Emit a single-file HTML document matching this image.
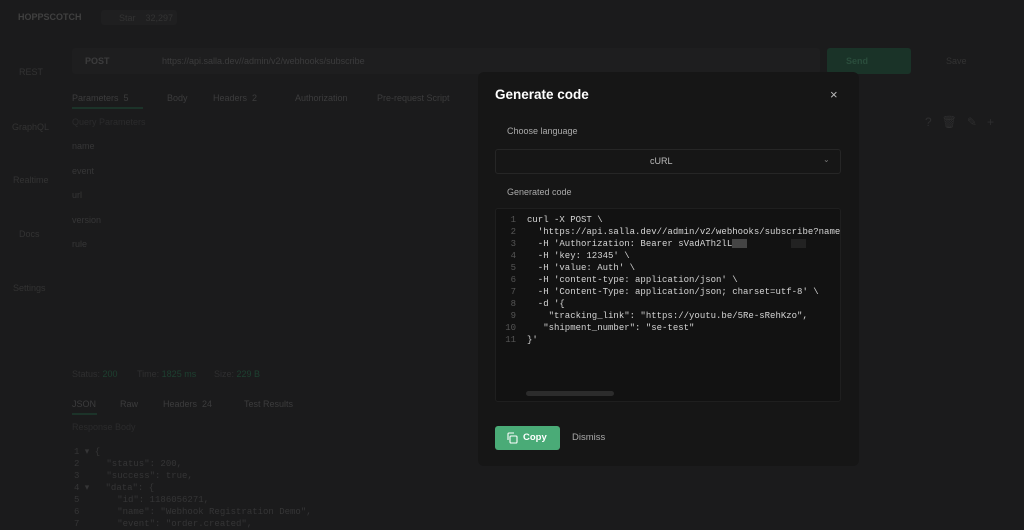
<!DOCTYPE html>
<html><head><meta charset="utf-8"><style>
*{box-sizing:border-box;margin:0;padding:0}
body{width:1024px;height:524px;overflow:hidden;background:#1b1b1c;font-family:"Liberation Sans",sans-serif;position:relative;color:#363637;font-size:9px}
.a{position:absolute;white-space:nowrap}
.mono{font-family:"Liberation Mono",monospace}
.modal{position:absolute;left:478px;top:72px;width:381px;height:394px;background:#161616;border-radius:6px}
.code{position:absolute;left:17px;top:136px;width:346px;height:194px;background:#121212;border:1px solid #1f1f1f;border-radius:3px;overflow:hidden}
.ln{position:absolute;left:0;width:20px;text-align:right;color:#555;font-family:"Liberation Mono",monospace;font-size:9px}
.cl{position:absolute;left:31px;color:#d4d4d4;font-family:"Liberation Mono",monospace;font-size:9px;white-space:pre}
.t{color:#3c3c3d}
</style></head><body>
<div class="a" style="left:18px;top:12px;font-weight:bold;font-size:9px;color:#404040">HOPPSCOTCH</div>
<div class="a" style="left:101px;top:10px;width:76px;height:15px;background:#1f1f20;border-radius:3px"></div>
<div class="a" style="left:119px;top:13px;color:#333">Star &nbsp;&nbsp; 32,297</div>
<div class="a" style="left:19px;top:67px;color:#333">REST</div>
<div class="a" style="left:12px;top:122px;color:#333">GraphQL</div>
<div class="a" style="left:13px;top:175px;color:#333">Realtime</div>
<div class="a" style="left:19px;top:229px;color:#333">Docs</div>
<div class="a" style="left:13px;top:283px;color:#333">Settings</div>
<div class="a" style="left:72px;top:48px;width:748px;height:26px;background:#1e1e1f;border-radius:3px"></div>
<div class="a t" style="left:85px;top:56px;font-weight:bold">POST</div>
<div class="a t" style="left:162px;top:56px">https://api.salla.dev//admin/v2/webhooks/subscribe</div>
<div class="a" style="left:827px;top:48px;width:84px;height:26px;background:#1a3328;border-radius:3px"></div>
<div class="a" style="left:846px;top:56px;color:#2a4d3c;font-weight:bold">Send</div>
<div class="a" style="left:946px;top:56px;color:#333">Save</div>
<div class="a t" style="left:72px;top:93px">Parameters &nbsp;5</div>
<div class="a t" style="left:167px;top:93px">Body</div>
<div class="a t" style="left:213px;top:93px">Headers &nbsp;2</div>
<div class="a t" style="left:295px;top:93px">Authorization</div>
<div class="a t" style="left:377px;top:93px">Pre-request Script</div>
<div class="a" style="left:72px;top:107px;width:71px;height:2px;background:#1c3329"></div>
<div class="a" style="left:72px;top:117px;color:#2b2b2c">Query Parameters</div>
<div class="a" style="left:72px;top:141px">name</div>
<div class="a" style="left:72px;top:166px">event</div>
<div class="a" style="left:72px;top:190px">url</div>
<div class="a" style="left:72px;top:215px">version</div>
<div class="a" style="left:72px;top:239px">rule</div>
<div class="a" style="left:72px;top:369px;color:#2f2f30">Status: <span style="color:#1d4030">200</span></div>
<div class="a" style="left:137px;top:369px;color:#2f2f30">Time: <span style="color:#1d4030">1825 ms</span></div>
<div class="a" style="left:214px;top:369px;color:#2f2f30">Size: <span style="color:#1d4030">229 B</span></div>
<div class="a t" style="left:72px;top:399px">JSON</div>
<div class="a t" style="left:120px;top:399px">Raw</div>
<div class="a t" style="left:163px;top:399px">Headers &nbsp;24</div>
<div class="a t" style="left:244px;top:399px">Test Results</div>
<div class="a" style="left:72px;top:413px;width:25px;height:2px;background:#1c3329"></div>
<div class="a" style="left:72px;top:422px;color:#2b2b2c">Response Body</div>
<div class="a mono" style="left:74px;top:446px;line-height:12px;color:#353536;white-space:pre">1 ▾ {
2     "status": 200,
3     "success": true,
4 ▾   "data": {
5       "id": 1186056271,
6       "name": "Webhook Registration Demo",
7       "event": "order.created",</div>
<div class="a" style="left:925px;top:115px;color:#2e2e2f;font-size:12px;letter-spacing:10px">?🗑✎+</div>
<div class="modal">
 <div class="a" style="left:17px;top:15px;color:#fff;font-weight:bold;font-size:13.5px">Generate code</div>
 <div class="a" style="left:352px;top:15px;color:#bbb;font-size:13px">×</div>
 <div class="a" style="left:29px;top:54px;color:#aaa;font-size:9px">Choose language</div>
 <div class="a" style="left:17px;top:77px;width:346px;height:25px;border:1px solid #262626;border-radius:3px"></div>
 <div class="a" style="left:172px;top:84px;color:#bbb;font-size:9px">cURL</div>
 <div class="a" style="left:345px;top:83px;color:#777;font-size:8px">⌄</div>
 <div class="a" style="left:29px;top:115px;color:#aaa;font-size:9px">Generated code</div>
 <div class="code">
  <div class="ln" style="top:6px">1</div><div class="cl" style="top:6px">curl -X POST \</div>
  <div class="ln" style="top:18px">2</div><div class="cl" style="top:18px">  'https://api.salla.dev//admin/v2/webhooks/subscribe?name</div>
  <div class="ln" style="top:30px">3</div><div class="cl" style="top:30px">  -H 'Authorization: Bearer sVadATh2lL</div>
  <div class="a" style="left:236px;top:30px;width:15px;height:9px;background:#444"></div>
  <div class="a" style="left:295px;top:30px;width:15px;height:9px;background:#222"></div>
  <div class="ln" style="top:42px">4</div><div class="cl" style="top:42px">  -H 'key: 12345' \</div>
  <div class="ln" style="top:54px">5</div><div class="cl" style="top:54px">  -H 'value: Auth' \</div>
  <div class="ln" style="top:66px">6</div><div class="cl" style="top:66px">  -H 'content-type: application/json' \</div>
  <div class="ln" style="top:78px">7</div><div class="cl" style="top:78px">  -H 'Content-Type: application/json; charset=utf-8' \</div>
  <div class="ln" style="top:90px">8</div><div class="cl" style="top:90px">  -d '{</div>
  <div class="ln" style="top:102px">9</div><div class="cl" style="top:102px">    "tracking_link": "https://youtu.be/5Re-sRehKzo",</div>
  <div class="ln" style="top:114px">10</div><div class="cl" style="top:114px">   "shipment_number": "se-test"</div>
  <div class="ln" style="top:126px">11</div><div class="cl" style="top:126px">}'</div>
  <div class="a" style="left:30px;top:182px;width:88px;height:5px;background:#2c2c2c;border-radius:3px"></div>
 </div>
 <div class="a" style="left:17px;top:354px;width:65px;height:24px;background:#4aab77;border-radius:3px"></div>
 <svg class="a" style="left:28px;top:360px" width="12" height="12" viewBox="0 0 12 12" fill="none" stroke="#fff" stroke-width="1.1"><rect x="4" y="4" width="7" height="7" rx="1"/><path d="M2 8V2a1 1 0 0 1 1-1h5"/></svg>
 <div class="a" style="left:45px;top:360px;color:#fff;font-weight:bold;font-size:9.5px">Copy</div>
 <div class="a" style="left:94px;top:360px;color:#aaa;font-size:9.5px">Dismiss</div>
</div>
</body></html>
